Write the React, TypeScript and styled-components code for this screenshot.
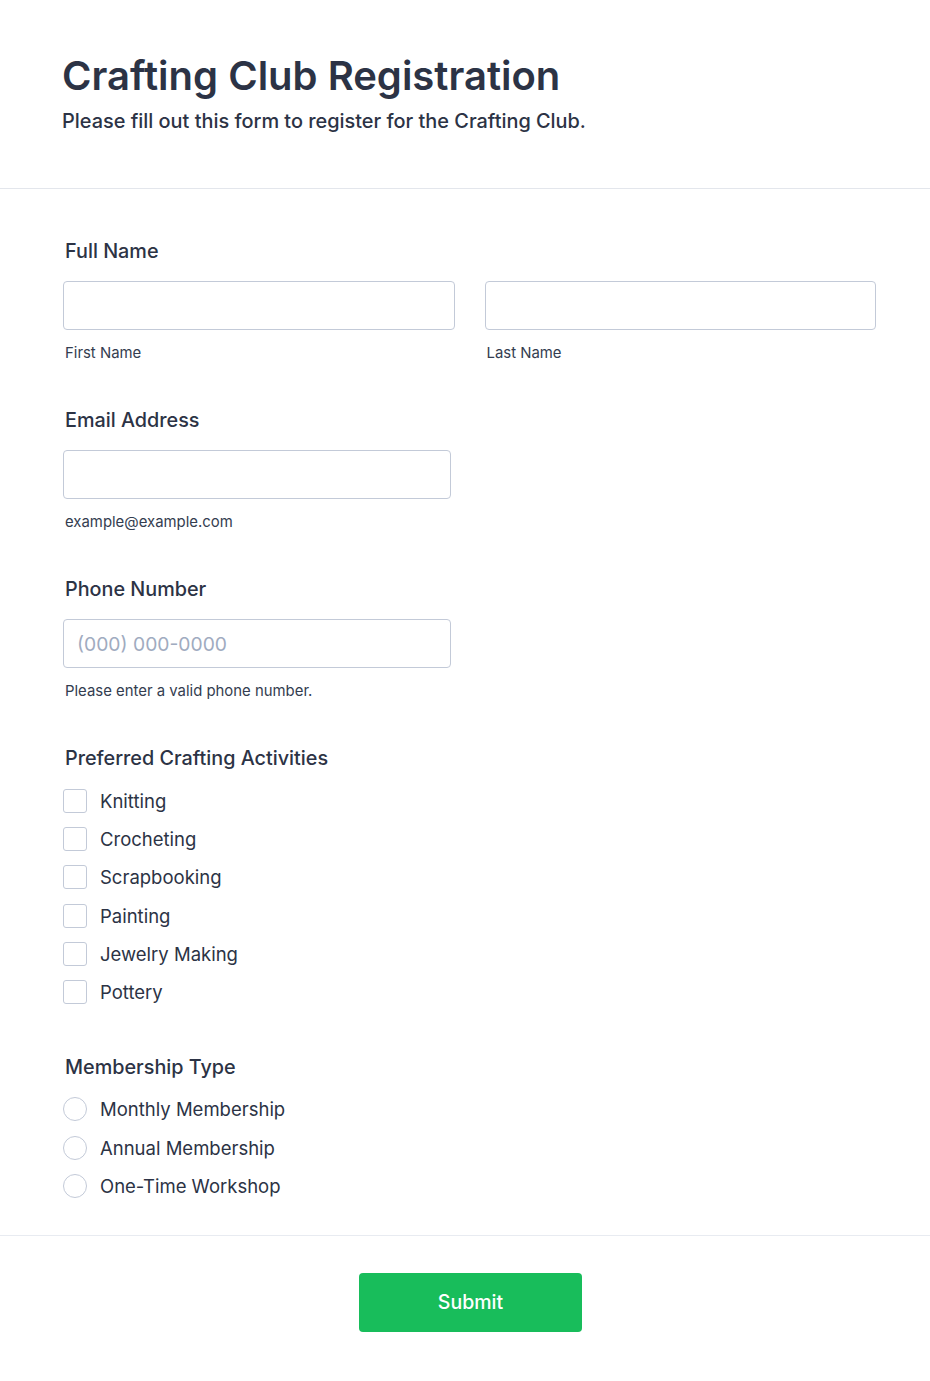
import React from 'react';
import styled, {createGlobalStyle} from 'styled-components';

const GlobalStyle = createGlobalStyle`
  body {
    margin: 0;
    background: #ffffff;
    font-family: Inter, "Noto Sans", sans-serif;
    color: #2c3345;
  }
`

const activities = ['Knitting', 'Crocheting', 'Scrapbooking', 'Painting', 'Jewelry Making', 'Pottery']
const memberships = ['Monthly Membership', 'Annual Membership', 'One-Time Workshop']

const Page = styled.div`
  width: 930px;
  min-height: 1381px;
  background: #ffffff;
`

const Header = styled.header`
  padding: 52px 54px 55px 62px;
  border-bottom: 1px solid #e3e6ec;
`

const Title = styled.h1`
  margin: 0;
  font-size: 40px;
  line-height: 48px;
  font-weight: 600;
  color: #2c3345;
`

const Subtitle = styled.p`
  margin: 9px 0 0;
  font-size: 19.9px;
  line-height: 24px;
  font-weight: 500;
  color: #2c3345;
`

const Form = styled.form`
  display: flex;
  flex-direction: column;
  padding: 50px 54px 0 63px;
  gap: 46px;
`

const Field = styled.div<{ $extraTop?: number }>`
  display: flex;
  flex-direction: column;
  margin-top: ${props => props.$extraTop ? props.$extraTop + 'px' : '0'};
`

const Label = styled.div`
  font-size: 19.8px;
  line-height: 24px;
  font-weight: 500;
  color: #2c3345;
  padding-left: 2px;
`

const InputRow = styled.div`
  display: grid;
  grid-template-columns: 1fr 1fr;
  column-gap: 30px;
  margin-top: 18px;
`

const InputCol = styled.div`
  display: flex;
  flex-direction: column;
`

const TextInput = styled.input<{ $width?: number }>`
  box-sizing: border-box;
  width: ${props => props.$width ? props.$width + 'px' : '100%'};
  height: 49px;
  margin-top: ${props => props.$width ? '18px' : '0'};
  border: 1px solid #c3cad8;
  border-radius: 4px;
  padding: 0 13px;
  font-family: Inter, "Noto Sans", sans-serif;
  font-size: 19.3px;
  color: #2c3345;
  background: #ffffff;
  outline: none;

  &::placeholder {
    color: #a0abc0;
  }
`

const SubLabel = styled.div`
  margin-top: 14px;
  font-size: 14.9px;
  line-height: 18px;
  color: #343d50;
  padding-left: 2px;
`

const OptionList = styled.div`
  display: flex;
  flex-direction: column;
  gap: 14.4px;
  margin-top: 18.5px;
`

const Option = styled.label`
  display: flex;
  align-items: center;
  gap: 13px;
  height: 24px;
  font-size: 18.5px;
  line-height: 24px;
  color: #2c3345;
`

const Box = styled.span<{ $round?: boolean }>`
  box-sizing: border-box;
  width: 24px;
  height: 24px;
  border: 1px solid #c3cad8;
  border-radius: ${props => props.$round ? '50%' : '3px'};
  background: #ffffff;
  flex-shrink: 0;
`

const Footer = styled.div`
  margin-top: 36.5px;
  border-top: 1px solid #e8ebf1;
  display: flex;
  justify-content: center;
  padding: 37px 0 49px 11px;
`

const SubmitButton = styled.button`
  width: 223px;
  height: 59px;
  border: none;
  border-radius: 4px;
  background: #18bd5b;
  color: #ffffff;
  font-family: Inter, "Noto Sans", sans-serif;
  font-size: 19.5px;
  font-weight: 500;
  cursor: pointer;
`

export default function App() {
    return (
        <Page>
            <GlobalStyle/>
            <Header>
                <Title>Crafting Club Registration</Title>
                <Subtitle>Please fill out this form to register for the Crafting Club.</Subtitle>
            </Header>
            <Form onSubmit={e => e.preventDefault()}>
                <Field>
                    <Label>Full Name</Label>
                    <InputRow>
                        <InputCol>
                            <TextInput type="text"/>
                            <SubLabel>First Name</SubLabel>
                        </InputCol>
                        <InputCol>
                            <TextInput type="text"/>
                            <SubLabel>Last Name</SubLabel>
                        </InputCol>
                    </InputRow>
                </Field>
                <Field>
                    <Label>Email Address</Label>
                    <TextInput type="email" $width={388}/>
                    <SubLabel>example@example.com</SubLabel>
                </Field>
                <Field>
                    <Label>Phone Number</Label>
                    <TextInput type="tel" $width={388} placeholder="(000) 000-0000"/>
                    <SubLabel>Please enter a valid phone number.</SubLabel>
                </Field>
                <Field>
                    <Label>Preferred Crafting Activities</Label>
                    <OptionList>
                        {activities.map(a => (
                            <Option key={a}><Box/>{a}</Option>
                        ))}
                    </OptionList>
                </Field>
                <Field $extraTop={4.5}>
                    <Label>Membership Type</Label>
                    <OptionList>
                        {memberships.map(m => (
                            <Option key={m}><Box $round/>{m}</Option>
                        ))}
                    </OptionList>
                </Field>
            </Form>
            <Footer>
                <SubmitButton type="button">Submit</SubmitButton>
            </Footer>
        </Page>
    );
}
